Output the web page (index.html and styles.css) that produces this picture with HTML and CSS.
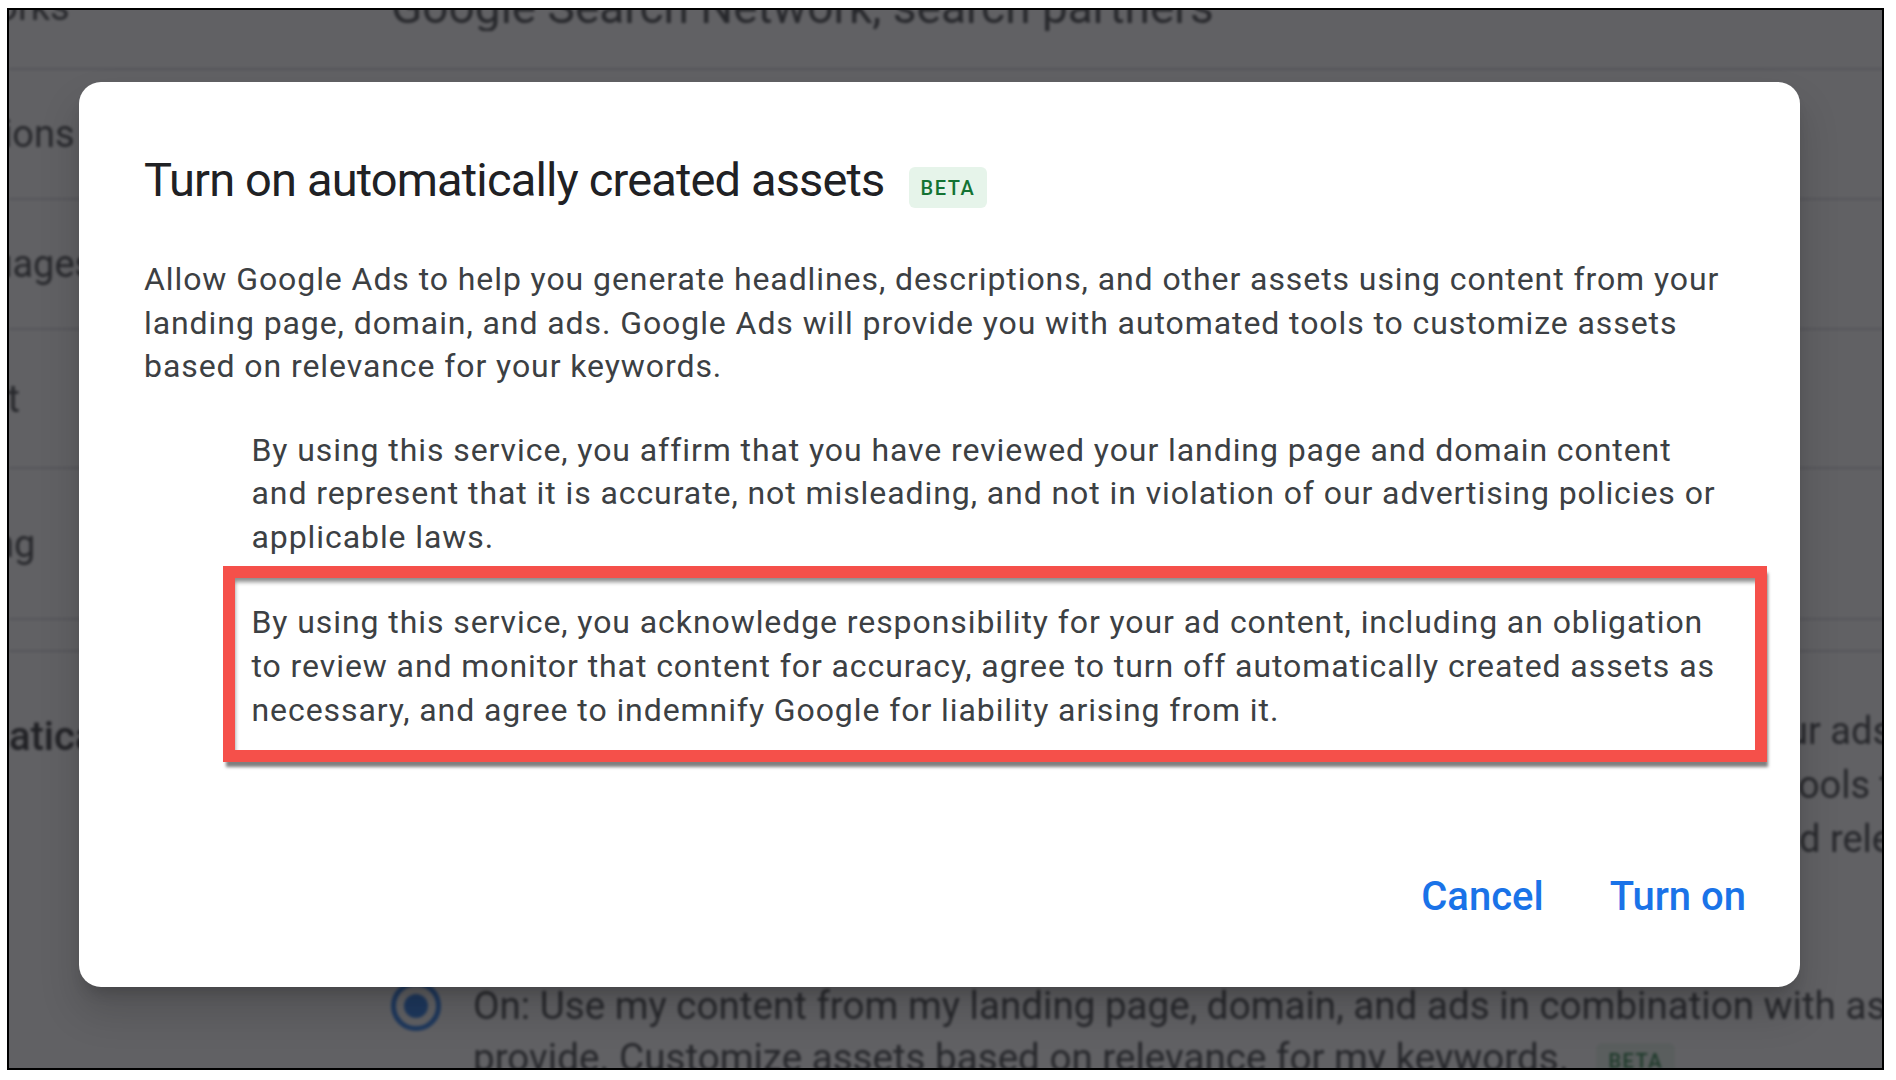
FILE: index.html
```html
<!DOCTYPE html>
<html lang="en">
<head>
<meta charset="utf-8">
<title>Campaign settings</title>
<link rel="stylesheet" href="styles.css">
</head>
<body>
<div class="frame">
  <div class="page">
    <div class="row row-top">
      <div class="label">Networks</div>
      <div class="value">Google Search Network, search partners</div>
    </div>
    <div class="row row-b">
      <div class="label">Locations</div>
      <div class="value">United States</div>
    </div>
    <div class="row row-c">
      <div class="label">Languages</div>
      <div class="value">English</div>
    </div>
    <div class="row row-d">
      <div class="label label-tight">Budget</div>
      <div class="value">$50.00/day</div>
    </div>
    <div class="row row-e">
      <div class="label">Bidding</div>
      <div class="value">Maximize clicks</div>
    </div>
    <div class="band"></div>
    <div class="section">
      <div class="sec-title">Automatically created assets</div>
      <div class="sec-body">
        <div class="para">
          <div class="ln">Allow Google Ads to generate headlines, descriptions, and other assets for your ads</div>
          <div class="ln">using content from your landing page, domain, and ads, with automated tools t</div>
          <div class="ln">to customize assets based on your keywords and rele</div>
        </div>
        <div class="choice">
          <span class="radio"><span class="dot"></span></span>
          <div class="choice-text">
            <div class="ln">On: Use my content from my landing page, domain, and ads in combination with assets that Google Ads will</div>
            <div class="ln">provide. Customize assets based on relevance for my keywords. <span class="tag">BETA</span></div>
          </div>
        </div>
      </div>
    </div>
  </div>
  <div class="scrim"></div>

  <div class="dialog" role="dialog" aria-labelledby="dlg-title">
    <div class="title-row">
      <h1 id="dlg-title">Turn on automatically created assets</h1>
      <span class="beta">BETA</span>
    </div>
    <p class="lead">Allow Google Ads to help you generate headlines, descriptions, and other assets using content from your<br>landing page, domain, and ads. Google Ads will provide you with automated tools to customize assets<br>based on relevance for your keywords.</p>
    <p class="note">By using this service, you affirm that you have reviewed your landing page and domain content<br>and represent that it is accurate, not misleading, and not in violation of our advertising policies or<br>applicable laws.</p>
    <div class="flag">
      <p class="note-in">By using this service, you acknowledge responsibility for your ad content, including an obligation<br>to review and monitor that content for accuracy, agree to turn off automatically created assets as<br>necessary, and agree to indemnify Google for liability arising from it.</p>
    </div>
    <div class="actions">
      <button class="btn" type="button">Cancel</button>
      <button class="btn" type="button">Turn on</button>
    </div>
  </div>
</div>
</body>
</html>
```
FILE: styles.css
```css
html, body {
  margin: 0;
  padding: 0;
  background: #fff;
}

body {
  font-family: Roboto, "Liberation Sans", Arial, sans-serif;
}

/* screenshot frame */
.frame {
  position: relative;
  margin: 8px 0 0 7px;
  width: 1877px;
  height: 1062px;
  box-sizing: border-box;
  border: 2px solid #000;
  overflow: hidden;
  background: #fff;
}

/* settings page behind the dialog */
.page {
  width: 1883px;
  color: #35383b;
  font-size: 38px;
  line-height: 48px;
  filter: blur(1.4px);
}

.row {
  display: grid;
  grid-template-columns: 382px 1fr;
  align-items: center;
  box-sizing: border-box;
  border-bottom: 2px solid #d4d6da;
  white-space: nowrap;
}

.label {
  margin-left: -101px;
}

.label-tight {
  margin-left: -109px;
}

.value {
  overflow: hidden;
}

.row-top {
  margin-top: -27px;
  height: 87px;
  align-items: start;
}

.row-top .value {
  font-size: 46px;
  line-height: 48px;
}

.row-b { height: 130px; }
.row-c { height: 130px; }
.row-d { height: 139px; }
.row-e { height: 151px; }

.band {
  height: 32px;
  box-sizing: border-box;
  border-bottom: 2px solid #d4d6da;
}

.section {
  display: grid;
  grid-template-columns: 382px 1fr;
  white-space: nowrap;
}

.sec-title {
  margin: 58px 0 0 -119px;
  font-size: 40px;
  font-weight: 500;
  line-height: 54px;
  color: #202124;
}

.sec-body {
  min-width: 0;
  padding-top: 52px;
}

/* lines pinned to the right edge, overflowing to the left */
.para {
  display: flex;
  flex-direction: column;
  align-items: flex-end;
  line-height: 54px;
}

.choice {
  display: flex;
  align-items: flex-start;
  margin-top: 114px;
  font-size: 38.6px;
  line-height: 52px;
}

.radio {
  flex: none;
  width: 50px;
  height: 50px;
  margin-top: 1px;
  box-sizing: border-box;
  border: 5px solid #1a73e8;
  border-radius: 50%;
  display: flex;
  align-items: center;
  justify-content: center;
}

.dot {
  width: 24px;
  height: 24px;
  border-radius: 50%;
  background: #1a73e8;
}

.choice-text {
  margin-left: 32px;
}

.tag {
  display: inline-block;
  margin-left: 18px;
  padding: 0 12px;
  font-size: 20px;
  line-height: 36px;
  font-weight: 500;
  letter-spacing: 1.5px;
  color: #137333;
  background: #e6f4ea;
  border-radius: 6px;
  vertical-align: middle;
}

.scrim {
  position: absolute;
  inset: 0;
  background: rgba(32, 33, 36, 0.71);
}

/* modal dialog */
.dialog {
  position: absolute;
  left: 70px;
  top: 72px;
  width: 1721px;
  height: 905px;
  box-sizing: border-box;
  padding: 70px 54px 66px 65px;
  display: flex;
  flex-direction: column;
  background: #fff;
  border-radius: 22px;
  box-shadow: 0 11px 15px -7px rgba(0, 0, 0, 0.2), 0 24px 38px 3px rgba(0, 0, 0, 0.14);
}

.title-row {
  display: flex;
  align-items: flex-end;
  gap: 24px;
  height: 56px;
}

.title-row h1 {
  margin: 0;
  font-size: 47px;
  line-height: 56px;
  font-weight: 400;
  letter-spacing: -0.85px;
  color: #202124;
  white-space: nowrap;
}

.beta {
  display: flex;
  align-items: center;
  height: 41px;
  padding: 0 12px;
  box-sizing: border-box;
  font-size: 20px;
  font-weight: 500;
  letter-spacing: 1.5px;
  color: #137333;
  background: #e6f4ea;
  border-radius: 6px;
}

.lead,
.note,
.note-in {
  font-size: 32px;
  line-height: 43.5px;
  letter-spacing: 0.92px;
  color: #3c4043;
  white-space: nowrap;
}

.lead {
  margin: 50px 0 0;
}

.note {
  margin: 40px 0 0 107.5px;
}

.flag {
  margin: 7px -21px 0 78.5px;
  padding: 22px 20px 18px 17px;
  border: 12px solid #f5504a;
  box-shadow: 2px 6px 3px -1px rgba(0, 0, 0, 0.5), inset 2px 6px 4px -2px rgba(0, 0, 0, 0.45);
}

.note-in {
  margin: 0;
  line-height: 44px;
}

.actions {
  margin-top: auto;
  display: flex;
  justify-content: flex-end;
  gap: 66px;
}

.btn {
  padding: 0;
  border: 0;
  background: none;
  font-family: Roboto, "Liberation Sans", Arial, sans-serif;
  font-size: 40px;
  line-height: 48px;
  font-weight: 500;
  color: #1a73e8;
  cursor: pointer;
}
```
